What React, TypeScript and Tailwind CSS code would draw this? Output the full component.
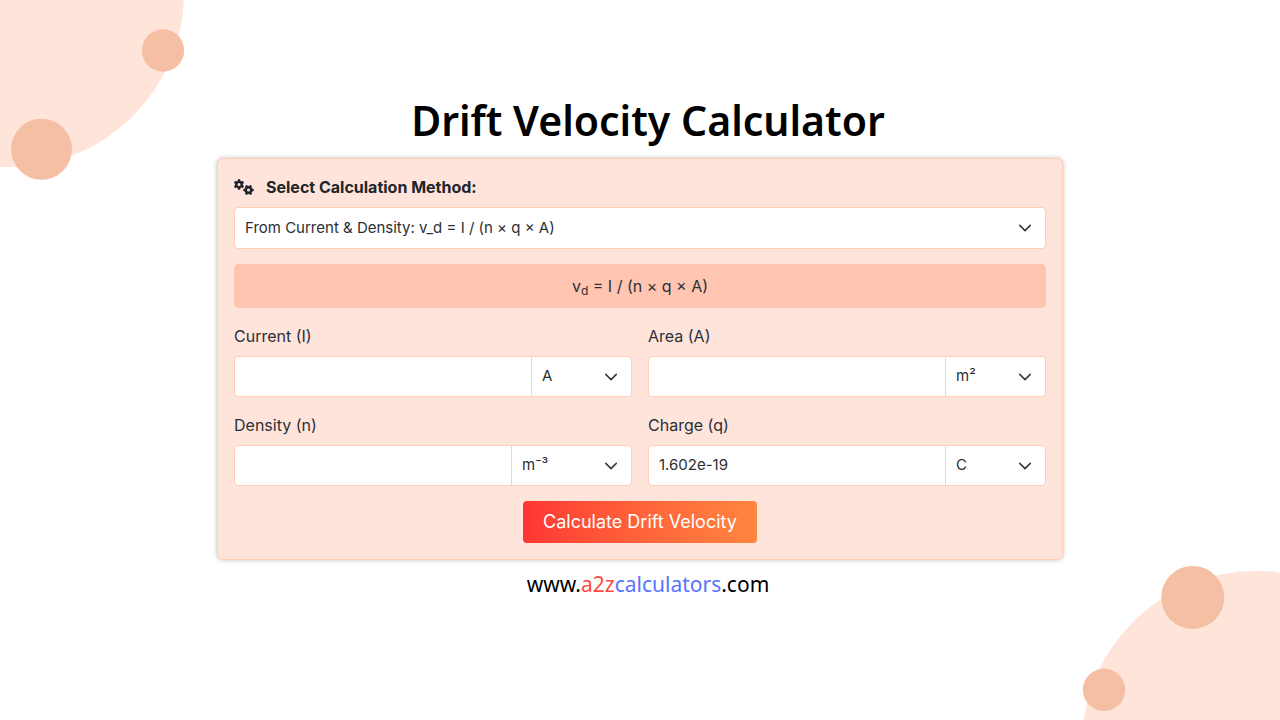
import { useState } from "react";
import type { ReactNode } from "react";
import { FaGears } from "react-icons/fa6";

function Chevron() {
  return (
    <svg
      viewBox="0 0 16 16"
      className="pointer-events-none absolute inset-y-0 right-3.5 my-auto h-3.5 w-3.5"
      fill="none"
      stroke="#343a40"
      strokeWidth="1.8"
      strokeLinecap="round"
      strokeLinejoin="round"
      aria-hidden="true"
    >
      <path d="m2 5 6 6 6-6" />
    </svg>
  );
}

type FieldProps = {
  id: string;
  label: string;
  initial?: string;
  units: string[];
  wideUnit?: boolean;
};

function Field({ id, label, initial = "", units, wideUnit = false }: FieldProps) {
  const [value, setValue] = useState(initial);
  return (
    <div className="flex min-w-0 flex-col gap-2">
      <label htmlFor={id} className="self-start text-base leading-6">
        {label}
      </label>
      <div className="flex h-[41px]">
        <input
          id={id}
          type="text"
          value={value}
          onChange={(e) => setValue(e.target.value)}
          className="min-w-0 flex-1 rounded-l border border-[#ffcdb8] bg-white px-2.5 pb-px text-[15px] outline-none"
        />
        <div className={wideUnit ? "relative -ml-px w-[121px]" : "relative -ml-px w-[101px]"}>
          <select
            aria-label={`${label} unit`}
            className="h-full w-full appearance-none rounded-r border border-[#ffcdb8] bg-white px-2.5 text-[15px] outline-none"
          >
            {units.map((unit) => (
              <option key={unit}>{unit}</option>
            ))}
          </select>
          <Chevron />
        </div>
      </div>
    </div>
  );
}

function Corner({ className, children }: { className: string; children: ReactNode }) {
  return (
    <svg viewBox="0 0 200 200" className={className} aria-hidden="true">
      {children}
    </svg>
  );
}

export default function App() {
  return (
    <main className="relative flex min-h-screen flex-col items-center overflow-hidden bg-white px-4 pt-[90px] pb-12 font-['Inter',sans-serif] text-[#2b3035]">
      <Corner className="absolute top-0 left-0 h-[200px] w-[200px]">
        <circle cx="10" cy="-7" r="174" fill="#ffe4da" />
        <circle cx="163" cy="50.5" r="21.2" fill="#f5bfa4" />
        <circle cx="41.5" cy="149.2" r="30.5" fill="#f5bfa4" />
      </Corner>
      <Corner className="absolute right-0 bottom-0 h-[200px] w-[200px]">
        <circle cx="176" cy="225" r="174" fill="#ffe4da" />
        <circle cx="112.7" cy="77.4" r="31.5" fill="#f5bfa4" />
        <circle cx="24" cy="169.8" r="21.2" fill="#f5bfa4" />
      </Corner>

      <h1 className="relative pl-4 text-center font-['Noto_Sans',sans-serif] text-[41px] leading-[60px] font-semibold text-black">
        Drift Velocity Calculator
      </h1>

      <form
        onSubmit={(e) => e.preventDefault()}
        className="relative mt-2 flex w-full max-w-[846px] flex-col rounded-md border border-[#ffcdb8] bg-[#ffe4dc] p-4 shadow-[0_0_5px_rgba(0,0,0,0.25)]"
      >
        <label
          htmlFor="method"
          className="mb-2 flex items-center gap-3 self-start text-base leading-6 font-bold text-[#212529]"
        >
          <FaGears className="h-4 w-5" aria-hidden="true" />
          Select Calculation Method:
        </label>
        <div className="relative h-[42px]">
          <select
            id="method"
            className="h-full w-full appearance-none rounded border border-[#ffcdb8] bg-white px-2.5 text-[15px] outline-none"
          >
            <option>From Current &amp; Density: v_d = I / (n × q × A)</option>
          </select>
          <Chevron />
        </div>

        <p className="mt-[15px] h-11 rounded-[5px] bg-[#ffc5b0] text-center text-base leading-11">
          v<sub>d</sub> = I / (n × q × A)
        </p>

        <div className="mt-4 grid grid-cols-1 gap-4 sm:grid-cols-2">
          <Field id="current" label="Current (I)" units={["A", "mA"]} />
          <Field id="area" label="Area (A)" units={["m²", "cm²"]} />
          <Field id="density" label="Density (n)" units={["m⁻³", "cm⁻³"]} wideUnit />
          <Field id="charge" label="Charge (q)" initial="1.602e-19" units={["C", "μC"]} />
        </div>

        <button
          type="submit"
          className="mt-[15px] h-[42px] self-center rounded bg-linear-to-r from-[#ff3434] to-[#ff8540] px-5 text-lg text-white"
        >
          Calculate Drift Velocity
        </button>
      </form>

      <a
        href="https://www.a2zcalculators.com"
        className="relative mt-2 pl-4 font-['Noto_Sans',sans-serif] text-[21px] leading-8 text-black"
      >
        www.<span className="text-[#ff4a3d]">a2z</span>
        <span className="text-[#5674ff]">calculators</span>.com
      </a>
    </main>
  );
}
